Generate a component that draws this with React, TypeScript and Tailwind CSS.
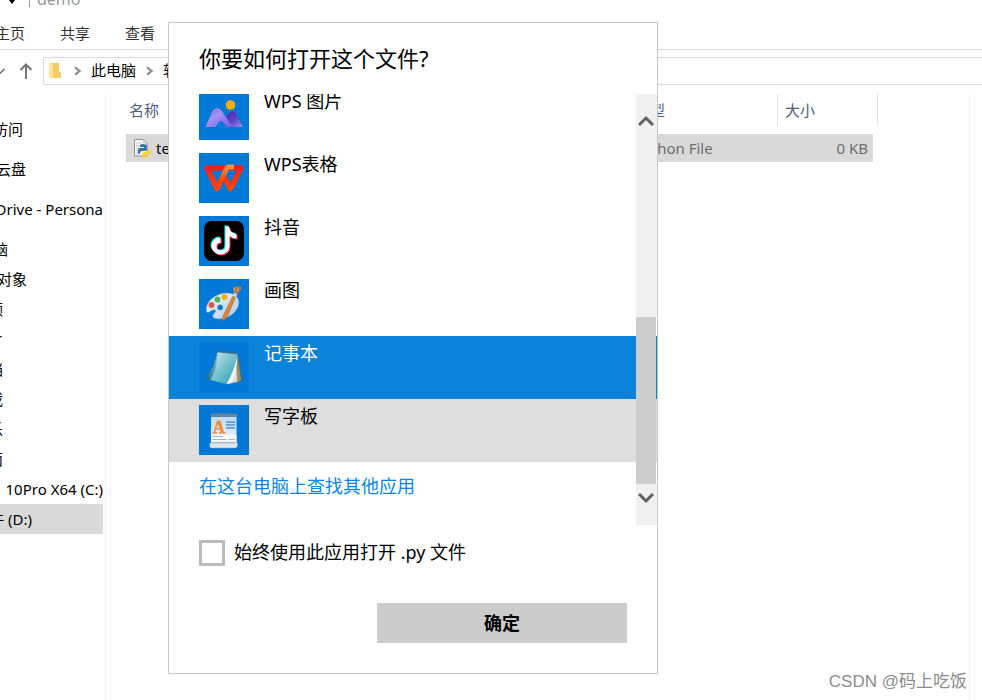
import type { ReactNode } from "react";

type App = { name: string; icon: ReactNode; row?: string };

const sidebar = [
  { label: "访问", end: "w-[23px]", gap: "mb-2.5" },
  { label: "云盘", end: "w-[26px]", gap: "mb-2.5" },
  { label: "Drive - Persona", end: "w-[103px]", gap: "mb-2.5" },
  { label: "脑", end: "w-2" },
  { label: "对象", end: "w-[27px]" },
  { label: "频", end: "w-[3px]" },
  { label: "片", end: "w-[3px]" },
  { label: "档", end: "w-[3px]" },
  { label: "载", end: "w-[3px]" },
  { label: "乐", end: "w-[3px]" },
  { label: "面", end: "w-[3px]" },
  { label: "10Pro X64 (C:)", end: "w-[103px]" },
  { label: "件 (D:)", end: "w-8", selected: true },
];

function PhotoIcon() {
  return (
    <svg viewBox="0 0 50 50" className="size-[50px]">
      <defs>
        <linearGradient id="hill" x1="0" y1="0" x2="1" y2="1">
          <stop offset="0" stopColor="#7264d8" />
          <stop offset=".4" stopColor="#a294f6" />
          <stop offset="1" stopColor="#6f58dc" />
        </linearGradient>
        <linearGradient id="hill2" x1="0" y1="0" x2="1" y2="1">
          <stop offset="0" stopColor="#4527b0" />
          <stop offset=".5" stopColor="#5b40c4" />
          <stop offset="1" stopColor="#9d8bf3" />
        </linearGradient>
      </defs>
      <path d="M25 29 31 22.500q3-2 5.500 0L44 37H33z" fill="url(#hill2)" />
      <path
        d="M6.500 37 13.500 20.500q1.500-3 5-2.500 2.500 0 4 2.500L34 37h-6l-4-5q-2-2-4 0l-3.500 5z"
        fill="url(#hill)"
      />
      <circle cx="31.500" cy="15" r="4.800" fill="#ffad05" />
    </svg>
  );
}

function SheetIcon() {
  return (
    <svg viewBox="0 0 50 50" className="size-[50px]" fill="none" strokeWidth="5.500" strokeLinejoin="round">
      <defs>
        <linearGradient id="wps" gradientUnits="userSpaceOnUse" x1="0" y1="12" x2="0" y2="39">
          <stop offset="0" stopColor="#f21b1e" />
          <stop offset="1" stopColor="#ff4d08" />
        </linearGradient>
        <linearGradient id="fold" gradientUnits="userSpaceOnUse" x1="31" y1="12" x2="22" y2="30">
          <stop offset="0" stopColor="#f39a45" />
          <stop offset="1" stopColor="#f5400c" />
        </linearGradient>
      </defs>
      <path d="M25 24 31.500 35.500 42 15H30" stroke="url(#wps)" />
      <path d="M27 15H8l10 20.500L24 23" stroke="url(#wps)" />
      <path d="m21 29 7-14q.500-1 2-1h5" stroke="url(#fold)" strokeWidth="5" />
    </svg>
  );
}

function DouyinIcon() {
  const note = "M26.500 10.500H30q1 7 7.500 7.500v4.500q-4 0-7-2.500v10.500a9 8.500 0 1 1-9-9v5a4.500 4 0 1 0 5 4z";
  return (
    <svg viewBox="0 0 50 50" className="size-[50px]">
      <rect x="5" y="5" width="40" height="40" rx="8" fill="#000" />
      <path d={note} fill="#25f4ee" transform="translate(-1 -1)" />
      <path d={note} fill="#fe2c55" transform="translate(1 1)" />
      <path d={note} fill="#fff" />
    </svg>
  );
}

function PaintIcon() {
  return (
    <svg viewBox="0 0 50 50" className="size-[50px]">
      <defs>
        <linearGradient id="palette" x1="0" y1="0" x2="1" y2="1">
          <stop offset="0" stopColor="#f6fbfe" />
          <stop offset="1" stopColor="#a4c9e2" />
        </linearGradient>
      </defs>
      <path
        fillRule="evenodd"
        d="M7.500 33C6 26 11 19 19 16c9-4 20-2 21 7 0 8-8 16-19 17-5 0-8-1-7-4 1-2 4-4 2-5-3-1-6 4-8.500 2m11-4.500a2.700 2.700 0 1 0 5.400 0 2.700 2.700 0 1 0-5.400 0"
        fill="url(#palette)"
        stroke="#6f98b5"
        strokeWidth=".5"
      />
      <circle cx="12.500" cy="26" r="2.900" fill="#e0554b" />
      <circle cx="18.500" cy="20.500" r="2.900" fill="#4fb35c" />
      <circle cx="25.500" cy="18" r="3.100" fill="#f9ab22" />
      <path d="m34 17 2.500 1.200L29 36q-2 4-5 6-1-2 .5-6z" fill="#dc853b" stroke="#98561f" strokeWidth=".5" />
      <path d="m34 17 1-3.500 3.500 1.500-2 3.200z" fill="#d5dadd" />
      <path d="M34.500 13.500Q34 10 34 8.500q4-2 9 0-1 2-4.500 6.500z" fill="#a87c56" />
      <path d="m35.500 12-.5-3M38 13l1-4" stroke="#d8b48d" strokeWidth=".8" />
    </svg>
  );
}

function NotepadIcon() {
  return (
    <svg viewBox="0 0 50 50" className="size-[50px]">
      <defs>
        <linearGradient id="pad" x1="0" y1="0" x2="1" y2="1">
          <stop offset="0" stopColor="#d4eff3" />
          <stop offset=".45" stopColor="#7cc5d2" />
          <stop offset="1" stopColor="#23a0b4" />
        </linearGradient>
        <linearGradient id="flap" x1="1" y1="0" x2="0" y2="1">
          <stop offset="0" stopColor="#9fc9d1" />
          <stop offset="1" stopColor="#176d83" />
        </linearGradient>
      </defs>
      <path d="m38.500 12 4 26-4 3-5-2z" fill="#a38a58" stroke="#6d5932" strokeWidth=".5" />
      <path d="M37 12 38.500 40 28 42z" fill="#d9e0e3" stroke="#7c8b91" strokeWidth=".5" />
      <path d="m18.500 10-4 14-8 12.500 6 1.500 8-26z" fill="url(#flap)" />
      <path d="m18.500 10 20 2-4 18-7 12-16-4q6-11 7-28" fill="url(#pad)" stroke="#5a97a3" strokeWidth=".4" />
      <path d="M38.500 13q-3 16-11 29l5-1q5-9 6-28" fill="#f4f7f8" />
      <path d="m18.500 9.500 20 2" stroke="#59676e" strokeWidth="2" strokeDasharray="1 1" />
    </svg>
  );
}

function WordpadIcon() {
  return (
    <svg viewBox="0 0 50 50" className="size-[50px]">
      <defs>
        <linearGradient id="paper" x1="0" y1="0" x2="0" y2="1">
          <stop offset="0" stopColor="#b9dbf3" />
          <stop offset="1" stopColor="#eaf4fb" />
        </linearGradient>
      </defs>
      <path d="M12 9h25.500v30H12z" fill="url(#paper)" />
      <path d="M11.500 8.500h26V12h-26z" fill="#66839b" />
      <path d="M12 30h25.500v8H12z" fill="#f5f8fa" />
      <path d="M11 38h27.500q.5 5-2.500 5H12.500q-2.500 0-1.500-5" fill="#dfe5ea" stroke="#8fa0b0" strokeWidth=".5" />
      <path d="M13.500 31.500H24M13.500 34.500h14M13.500 37.500H36M29.500 34.500H36" stroke="#a3b3cb" />
      <path d="M27 17h9M27 20h9M27 23h9" stroke="#4f92cb" strokeWidth="1.500" />
      <path
        fillRule="evenodd"
        d="M18 15.500h3.500L25 27h1.500v1.500H20V27h1.500l-.7-2.500H17L16 27h2v1.500h-4.500V27h1zm1 3.500-1.500 4h2.800z"
        fill="#f58a3c"
      />
    </svg>
  );
}

const apps: App[] = [
  { name: "WPS 图片", icon: <PhotoIcon /> },
  { name: "WPS表格", icon: <SheetIcon /> },
  { name: "抖音", icon: <DouyinIcon /> },
  { name: "画图", icon: <PaintIcon /> },
  { name: "记事本", icon: <NotepadIcon />, row: "bg-[#0c83db] text-white" },
  { name: "写字板", icon: <WordpadIcon />, row: "bg-[#dedede]" },
];

function Chevron({ className, d }: { className: string; d: string }) {
  return (
    <svg viewBox="0 0 16 16" className={className} fill="none" stroke="currentColor">
      <path d={d} />
    </svg>
  );
}

function PythonFile() {
  return (
    <svg viewBox="0 0 18 20" className="mr-[5px] h-5 w-[18px] shrink-0">
      <path d="M1.500 1.500h9l3.500 3.500v13h-12.500z" fill="#f8f8f8" stroke="#909090" />
      <path d="M10.500 1.500V5H14M3 5h6M3 7.500h8M3 10h4M3 12.500h3M3 15h3" fill="none" stroke="#c4c4c4" />
      <path d="M5 15v-3q0-2 2-2h4V9H7V8q0-2 3-2t4 2v3q0 2-2 2H9q-2 0-2 3-2 0-2-1" fill="#3474a8" />
      <path d="M17.500 12v3q0 2-2 2H11v1h4q0 2-3 2t-3-2v-2q0-2 2-2h2q2 0 2-3 2.500 0 2.500 1" fill="#ffd43f" />
    </svg>
  );
}

function Explorer() {
  return (
    <div className="flex min-h-screen flex-col">
      <div className="flex h-[17px] items-start overflow-hidden">
        <svg viewBox="0 0 6 4" className="ml-[9px] h-1 w-1.5">
          <path d="M0 0h6L3 4z" />
        </svg>
        <span className="ml-3.5 h-[7px] w-px bg-[#999]" />
        <div className="ml-[7px] flex h-[11px] items-end text-base leading-6 text-[#999]">demo</div>
      </div>
      <div className="flex h-[33px] items-center border-b border-[#dadada] text-[#333]">
        <button className="flex w-[25px] justify-end whitespace-nowrap">主页</button>
        <button className="ml-[35px]">共享</button>
        <button className="ml-[35px]">查看</button>
      </div>
      <div className="flex items-center pt-[7px] text-[#666]">
        <Chevron className="-ml-1.5 size-3 stroke-2" d="m2 5 6 6 6-6" />
        <svg viewBox="0 0 14 16" className="mr-2.5 ml-[13px] h-4 w-3.5" fill="none" stroke="#777" strokeWidth="2">
          <path d="M7 16V1.500M1.500 7 7 1.500 12.500 7" />
        </svg>
        <div className="flex h-7 grow items-center border border-r-0 border-[#d9d9d9] text-black">
          <svg viewBox="0 0 14 18" className="ml-1 h-[18px] w-3.5">
            <path d="M2 1h9v9h2v6H2z" fill="#f3cc65" />
            <path d="M1 1l4 2v14l-4-1z" fill="#ffe49a" />
          </svg>
          <Chevron className="ml-2.5 size-3 stroke-3 text-[#8a8a8a]" d="m4 3 6 5-6 5" />
          <span className="ml-[7px] pb-0.5">此电脑</span>
          <Chevron className="ml-2 size-3 stroke-3 text-[#8a8a8a]" d="m4 3 6 5-6 5" />
          <span className="ml-[7px] pb-0.5">软件</span>
        </div>
      </div>
      <div className="mt-[9px] flex grow">
        <nav className="w-[106px] shrink-0 border-r border-[#f3f3f3] pt-5 pr-0.5">
          {sidebar.map((item) => (
            <div
              key={item.label}
              className={`flex h-[30px] items-center overflow-hidden ${item.gap ?? ""} ${item.selected ? "bg-[#d9d9d9]" : ""}`}
            >
              <a href="#" className={`flex justify-end whitespace-nowrap ${item.end}`}>
                {item.label}
              </a>
            </div>
          ))}
        </nav>
        <main className="mr-3 grow border-r border-[#f3f3f3] pl-5">
          <table className="w-[752px] table-fixed border-collapse text-left">
            <thead>
              <tr className="h-8 text-[#4c607a]">
                <th className="w-[506px] pl-[3px] font-normal">名称</th>
                <th className="border-r border-[#e3e3e3] pl-[3px] font-normal">类型</th>
                <th className="w-[100px] border-r border-[#e3e3e3] pl-[7px] font-normal">大小</th>
              </tr>
            </thead>
          </table>
          <table className="mt-2 w-[747px] table-fixed border-collapse">
            <tbody>
              <tr className="h-7 bg-[#d9d9d9] text-[#6d6d6d]">
                <td className="w-[506px] p-0 pl-[7px] text-black">
                  <div className="flex items-center">
                    <PythonFile />
                    te
                  </div>
                </td>
                <td className="p-0 pl-[3px]">Python File</td>
                <td className="w-[95px] p-0 pr-[5px] text-right">0 KB</td>
              </tr>
            </tbody>
          </table>
        </main>
      </div>
    </div>
  );
}

function OpenWithDialog() {
  return (
    <div
      role="dialog"
      aria-labelledby="open-with-title"
      className="absolute top-[22px] left-[168px] w-[490px] border border-[#c8c8c8] bg-white pb-[30px] text-lg leading-6"
    >
      <h1 id="open-with-title" className="mb-[21px] px-[30px] pt-5 text-[22px] leading-[30px]">
        你要如何打开这个文件?
      </h1>
      <div className="grid h-[431px] overflow-hidden">
        <div className="col-start-1 row-start-1 -mt-2.5">
          {apps.map((app) => (
            <button
              key={app.name}
              className={`flex h-[63px] w-full items-start pl-[30px] text-left ${app.row ?? ""}`}
            >
              <span className="mt-1.5 bg-[#0078d7]">{app.icon}</span>
              <span className="mt-[5px] ml-[15px]">{app.name}</span>
            </button>
          ))}
          <a href="#" className="mt-3 ml-[30px] inline-block text-[#0a84e8]">
            在这台电脑上查找其他应用
          </a>
        </div>
        <div className="z-10 col-start-1 row-start-1 flex w-[21px] flex-col justify-self-end text-[#606060]">
          <div className="h-[223px] bg-[#f0f0f0] pt-[19px]">
            <Chevron className="mr-auto ml-0.5 size-4 stroke-3" d="m1 12 7-7 7 7" />
          </div>
          <div className="mr-px h-[167px] bg-[#cdcdcd]" />
          <div className="h-[41px] bg-[#f0f0f0] pt-1.5">
            <Chevron className="mr-auto ml-0.5 size-4 stroke-3" d="m1 4 7 7 7-7" />
          </div>
        </div>
      </div>
      <label className="mt-[15px] flex items-center pl-[30px]">
        <input type="checkbox" className="mr-[9px] size-[26px] appearance-none border-3 border-[#bbb] bg-white" />
        <span className="pb-0.5">始终使用此应用打开 .py 文件</span>
      </label>
      <button className="mt-[37px] mr-[30px] ml-auto block h-10 w-[250px] bg-[#ccc] font-bold">确定</button>
    </div>
  );
}

export default function App() {
  return (
    <div className="relative min-h-screen overflow-hidden bg-white font-['Noto_Sans','Noto_Sans_CJK_SC',sans-serif] text-[15px] leading-5 text-black">
      <Explorer />
      <OpenWithDialog />
      <div className="absolute right-[15px] bottom-1.5 font-['Liberation_Sans','Noto_Sans_CJK_SC',sans-serif] text-[17px] leading-6 text-[#8c8c8c]">
        CSDN @码上吃饭
      </div>
    </div>
  );
}
